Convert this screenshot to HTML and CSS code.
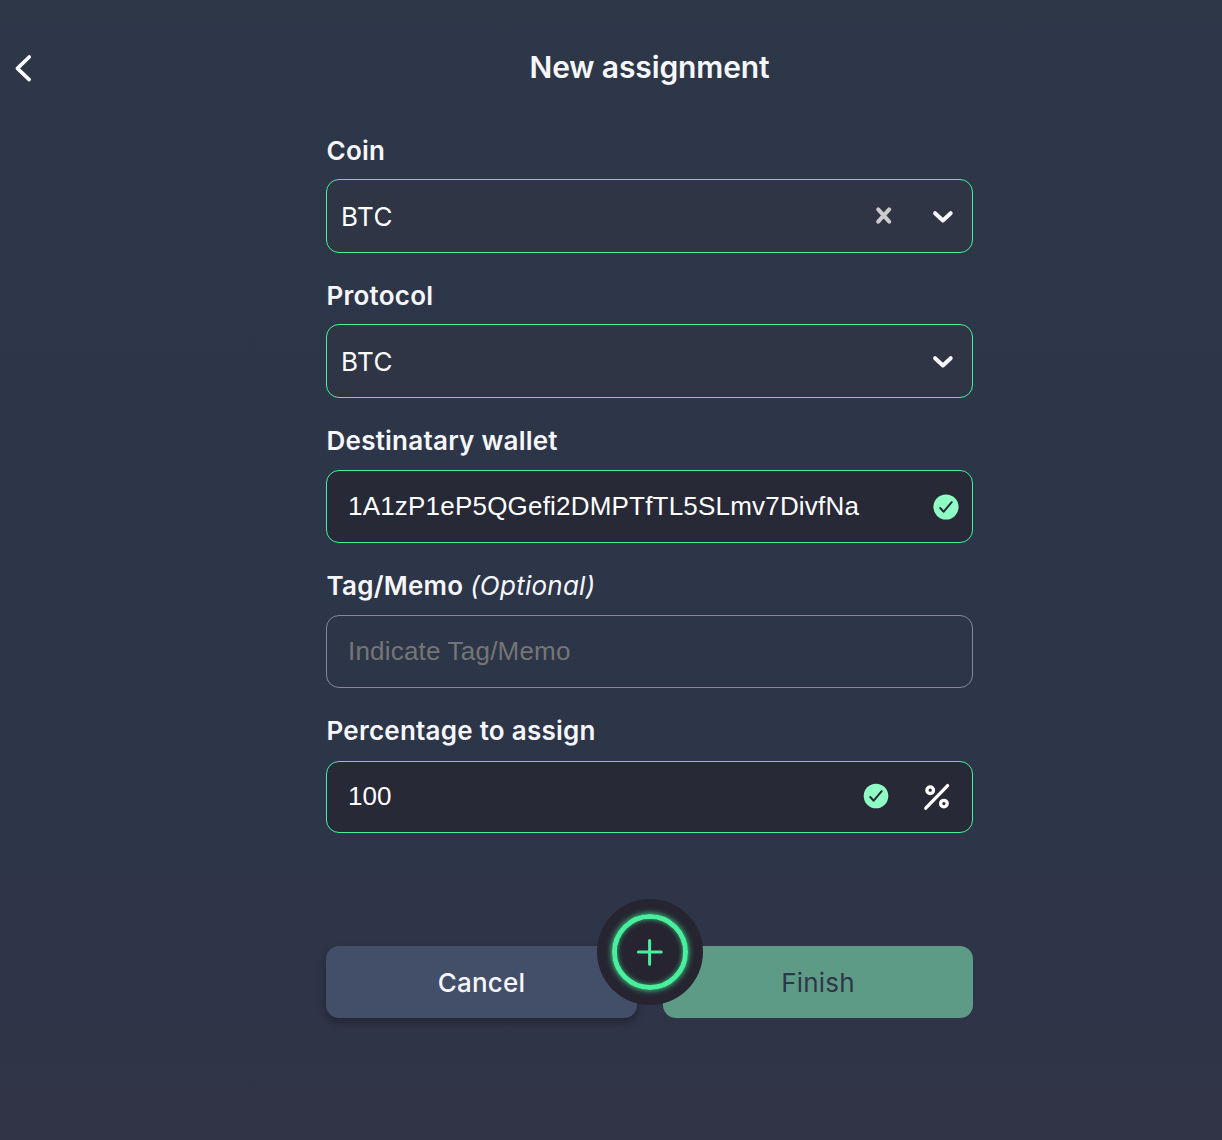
FILE: index.html
```html
<!DOCTYPE html>
<html lang="en">
<head>
<meta charset="utf-8">
<title>New assignment</title>
<link rel="stylesheet" href="styles.css">
</head>
<body>
<header class="header">
  <button class="back" aria-label="Back"><svg width="20" height="30" viewBox="0 0 20 30"><path d="M16.2 4 4.4 15.4 16.2 26.6"/></svg></button>
  <h1 class="title">New assignment</h1>
</header>
<main class="form">
  <div class="field">
    <div class="label">Coin</div>
    <div class="box select">
      <span class="value">BTC</span>
      <svg class="clear" width="20" height="20" viewBox="0 0 20 20"><path d="M4.2 3.4 15.2 15.7M15.2 3.4 4.2 15.7"/></svg>
      <svg class="chevron" width="24" height="20" viewBox="0 0 24 20"><path d="M4.1 7.2 11.9 14.5 19.7 7.2"/></svg>
    </div>
  </div>
  <div class="field">
    <div class="label">Protocol</div>
    <div class="box select">
      <span class="value">BTC</span>
      <svg class="chevron" width="24" height="20" viewBox="0 0 24 20"><path d="M4.1 7.2 11.9 14.5 19.7 7.2"/></svg>
    </div>
  </div>
  <div class="field">
    <div class="label">Destinatary wallet</div>
    <div class="box input valid wallet">
      <span class="value">1A1zP1eP5QGefi2DMPTfTL5SLmv7DivfNa</span>
      <svg class="check" width="26" height="26" viewBox="0 0 26 26"><circle cx="13" cy="13" r="12.6"/><path d="M7.2 14 10.7 17.7 18.7 8.2"/></svg>
    </div>
  </div>
  <div class="field">
    <div class="label">Tag/Memo <em class="optional">(Optional)</em></div>
    <div class="box input memo"><span class="placeholder">Indicate Tag/Memo</span></div>
  </div>
  <div class="field">
    <div class="label">Percentage to assign</div>
    <div class="box input valid percentage">
      <span class="value">100</span>
      <svg class="check small" width="26" height="26" viewBox="0 0 26 26"><circle cx="13" cy="13" r="12.3"/><path d="M7.2 14 10.7 17.7 18.7 8.2"/></svg>
      <svg class="percent" width="30" height="30" viewBox="0 0 30 30"><path d="M3.8 27.2 25.6 4.6"/><circle cx="8.2" cy="9.2" r="3.3"/><circle cx="21.9" cy="22.6" r="3.3"/></svg>
    </div>
  </div>
  <div class="actions">
    <button class="btn cancel">Cancel</button>
    <button class="btn finish">Finish</button>
    <button class="add" aria-label="Add assignment"><span class="ring"><svg width="30" height="30" viewBox="0 0 30 30"><path d="M14.6 3.6V27.2M3.4 15.1H26.2"/></svg></span></button>
  </div>
</main>
</body>
</html>
```
FILE: styles.css
```css
* { box-sizing: border-box; }
body {
  margin: 0;
  min-height: 1140px;
  background: linear-gradient(#2d3748 0%, #2d3548 75%, #303446 100%);
  color: #f7f7fb;
  font-family: Inter, "Liberation Sans", sans-serif;
}
svg { display: block; fill: none; stroke-linecap: round; stroke-linejoin: round; }
button { border: 0; padding: 0; background: none; font: inherit; color: inherit; }
.header {
  display: grid;
  grid-template-columns: 326px 647px;
  height: 135px;
  align-items: center;
}
.back { padding-left: 13px; justify-self: start; }
.back svg { stroke: #fff; stroke-width: 3.6; }
.title { margin: 0; padding-bottom: 2px; text-align: center; font-size: 30px; font-weight: 600; line-height: 36px; letter-spacing: -.12px; }
.form { width: 647px; margin-left: 326px; }
.field { height: 145px; }
.label {
  height: 44px;
  padding-left: .5px;
  font-size: 26px;
  font-weight: 600;
  line-height: 32px;
  letter-spacing: .24px;
}
.optional { font-weight: 400; }
.box {
  display: flex;
  align-items: center;
  height: 74px;
  border: 1px solid #48f09d;
  border-radius: 13px;
}
.select { background: #303546; padding: 0 17px 0 14px; font-size: 26px; letter-spacing: .5px; }
.value { flex: 1; color: #fff; }
.clear { margin-right: 37px; stroke: #ccc; stroke-width: 4; }
.chevron { stroke: #f7f7fb; stroke-width: 4; }
.input {
  height: 73px;
  padding: 0 13px 0 21px;
  border-color: #858a92;
  font-family: "Liberation Sans", Arial, sans-serif;
  font-size: 26px;
  letter-spacing: .2px;
}
.valid { background: #282937; border-color: #48f09d; }
.wallet { margin-top: 1px; }
.memo { margin-top: 1px; }
.percentage { height: 72px; margin-top: 2px; padding-right: 20px; padding-bottom: 2px; letter-spacing: 0; }
.placeholder { color: #757575; }
.check circle { fill: #8fffc4; }
.check path { stroke: #282937; stroke-width: 2; }
.small { margin-right: 33px; }
.percent { stroke: #fff; stroke-width: 3.3; }
.actions {
  position: relative;
  display: grid;
  grid-template-columns: 311px 310px;
  gap: 26px;
  margin-top: 86px;
}
.btn { height: 72px; border-radius: 13px; font-size: 26px; letter-spacing: .2px; }
.cancel { background: #434f68; font-weight: 500; box-shadow: 0 4px 8px rgba(0, 0, 0, .3); }
.finish { background: #5e9b86; color: #2e3748; }
.add {
  position: absolute;
  left: 271px;
  top: -47px;
  display: grid;
  place-items: center;
  width: 106px;
  height: 106px;
  border-radius: 50%;
  background: #262430;
}
.ring {
  display: grid;
  place-items: center;
  width: 76px;
  height: 76px;
  border: 5px solid #48f09d;
  border-radius: 50%;
  box-shadow: 0 0 6px #48f09d, inset 0 0 5px rgba(72, 240, 157, .7);
}
.ring svg { stroke: #48f09d; stroke-width: 3; }
```
